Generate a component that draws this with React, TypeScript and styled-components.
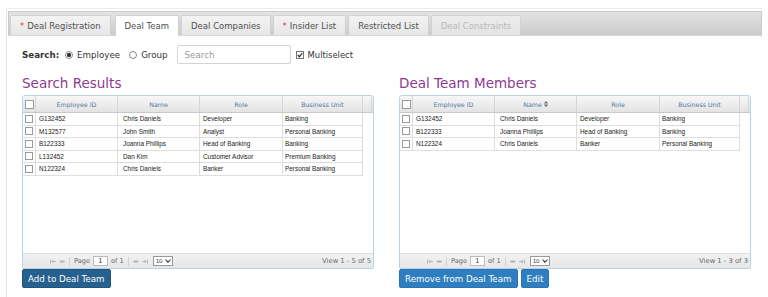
import styled, { createGlobalStyle } from "styled-components";

const GlobalStyle = createGlobalStyle`
  html, body {
    margin: 0;
    padding: 0;
    background: #fff;
  }
  body {
    font-family: "DejaVu Sans", Verdana, sans-serif;
  }
`;

type Member = [string, string, string, string];

const searchResults: Member[] = [
  ["G132452", "Chris Daniels", "Developer", "Banking"],
  ["M132577", "John Smith", "Analyst", "Personal Banking"],
  ["B122333", "Joanna Phillips", "Head of Banking", "Banking"],
  ["L132452", "Dan Kim", "Customer Advisor", "Premium Banking"],
  ["N122324", "Chris Daniels", "Banker", "Personal Banking"],
];

const teamMembers: Member[] = [
  ["G132452", "Chris Daniels", "Developer", "Banking"],
  ["B122333", "Joanna Phillips", "Head of Banking", "Banking"],
  ["N122324", "Chris Daniels", "Banker", "Personal Banking"],
];

const colWidths = [13, 82, 82, 83, 80];

const Page = styled.div`
  padding: 8px 6px 0 6px;
  height: 289px;
  overflow: hidden;
`;

const Frame = styled.div`
  border-left: 1px solid #e4e4e4;
  border-top: 1px solid #ececec;
  height: 100%;
  padding: 2px 0 0 1px;
  box-sizing: border-box;
`;

const TabBar = styled.div`
  display: flex;
  align-items: flex-end;
  gap: 2px;
  height: 23px;
  padding-left: 1px;
  border: 1px solid #c9c9c9;
  border-bottom-color: #d8d8d8;
  background: linear-gradient(#e3e3e3, #cbcbcb);
`;

const Tab = styled.div<{ $active?: boolean; $disabled?: boolean }>`
  height: ${(p) => (p.$active ? "21px" : "20px")};
  margin-bottom: ${(p) => (p.$active ? "-1px" : "0")};
  margin-left: ${(p) => (p.$active ? "2px" : "0")};
  padding: 0 9px;
  display: flex;
  align-items: center;
  box-sizing: border-box;
  font-size: 8.5px;
  border: 1px solid ${(p) => (p.$active ? "#d0d0d0" : "#d2d2d2")};
  border-bottom: none;
  border-radius: 2px 2px 0 0;
  color: ${(p) => (p.$disabled ? "#b8b8b8" : "#505050")};
  background: ${(p) =>
    p.$active
      ? "#fff"
      : p.$disabled
      ? "linear-gradient(#ececec, #e4e4e4)"
      : "linear-gradient(#f3f3f3, #e6e6e6)"};
  white-space: nowrap;
`;

const Req = styled.span`
  color: #e23a3a;
  margin-right: 3px;
`;

const Content = styled.div`
  padding-left: 14px;
`;

const SearchRow = styled.div`
  display: flex;
  align-items: center;
  height: 19px;
  margin-top: 9px;
  font-size: 8.7px;
  color: #333;
`;

const Label = styled.span`
  font-weight: bold;
  margin-right: 6px;
`;

const Option = styled.label`
  display: flex;
  align-items: center;
  gap: 4px;
  margin-right: 9px;
`;

const RadioDot = styled.span<{ $on?: boolean }>`
  width: 6px;
  height: 6px;
  border-radius: 50%;
  border: 1px solid #888;
  background: ${(p) => (p.$on ? "radial-gradient(#333 45%, #fff 55%)" : "#fff")};
`;

const SearchInput = styled.div`
  width: 114px;
  height: 19px;
  box-sizing: border-box;
  border: 1px solid #d4d4d4;
  border-radius: 2px;
  padding-left: 7px;
  display: flex;
  align-items: center;
  color: #9a9a9a;
  margin: 0 5px 0 0;
`;

const CheckMark = styled.span`
  width: 6px;
  height: 6px;
  border: 1px solid #777;
  display: flex;
  align-items: center;
  justify-content: center;
  margin-right: 4px;
  svg {
    display: block;
  }
`;

const Multi = styled.span`
  font-size: 8.4px;
`;

const Columns = styled.div`
  display: flex;
  gap: 25px;
  margin-top: 10px;
`;

const Panel = styled.div`
  width: 352px;
  display: flex;
  flex-direction: column;
`;

const Heading = styled.h2`
  margin: 0 0 3px 0;
  font-size: 13.5px;
  line-height: 18px;
  font-weight: normal;
  color: #8d3b91;
`;

const Grid = styled.div`
  border: 1px solid #b9d3e8;
  border-radius: 3px 3px 2px 2px;
  display: flex;
  flex-direction: column;
  overflow: hidden;
`;

const HeaderRow = styled.div`
  display: flex;
  height: 16px;
  border-bottom: 1px solid #c9c9c9;
  background: linear-gradient(#f7f7f7, #e3e3e3);
`;

const HeadCell = styled.div<{ $w: number }>`
  width: ${(p) => p.$w}px;
  flex: none;
  box-sizing: border-box;
  border-right: 1px solid #d5d5d5;
  display: flex;
  align-items: center;
  justify-content: center;
  gap: 2px;
  font-size: 6.3px;
  color: #5279a8;
`;

const Spacer = styled.div`
  flex: 1;
  border-right: 1px solid #d5d5d5;
  margin-right: 1px;
`;

const Body = styled.div`
  height: 140px;
  background: #fff;
`;

const Row = styled.div`
  display: flex;
  height: 12.5px;
  width: 340px;
  box-sizing: border-box;
  border-bottom: 1px solid #dedede;
`;

const Cell = styled.div<{ $w: number; $pad?: number }>`
  width: ${(p) => p.$w}px;
  flex: none;
  box-sizing: border-box;
  border-right: 1px solid #dedede;
  padding-left: ${(p) => p.$pad ?? 3}px;
  display: flex;
  align-items: center;
  justify-content: ${(p) => (p.$pad === 0 ? "center" : "flex-start")};
  font-family: "Liberation Sans", Arial, sans-serif;
  font-size: 6.4px;
  color: #222;
  white-space: nowrap;
  overflow: hidden;
`;

const Box = styled.span<{ $size?: number }>`
  width: ${(p) => p.$size ?? 6}px;
  height: ${(p) => p.$size ?? 6}px;
  border: 1px solid #9a9a9a;
  background: #fff;
  display: block;
`;

const Pager = styled.div`
  height: 14px;
  border-top: 1px solid #dcdcdc;
  background: linear-gradient(#f2f2f2, #e6e6e6);
  display: flex;
  align-items: center;
  font-size: 6.6px;
  color: #666;
  padding: 0 2px 0 27px;
`;

const PagerGroup = styled.div`
  display: flex;
  align-items: center;
  gap: 3px;
`;

const Sep = styled.span`
  width: 1px;
  height: 9px;
  background: #d4d4d4;
  margin: 0 1px;
`;

const PageInput = styled.span`
  width: 15px;
  height: 10px;
  box-sizing: border-box;
  border: 1px solid #bbb;
  background: #fff;
  display: flex;
  align-items: center;
  justify-content: center;
  color: #333;
`;

const PageSelect = styled.span`
  width: 20px;
  height: 10px;
  box-sizing: border-box;
  border: 1px solid #999;
  background: #fff;
  display: flex;
  align-items: center;
  justify-content: space-between;
  padding: 0 1px 0 2px;
  color: #333;
  font-size: 5.5px;
  margin-left: 2px;
`;

const ViewText = styled.span`
  margin-left: auto;
  font-size: 6.8px;
  color: #6a6a6a;
`;

const ButtonRow = styled.div`
  display: flex;
  gap: 3px;
`;

const ActionButton = styled.button<{ $dark?: boolean }>`
  height: 19px;
  padding: 0 5px;
  border: 1px solid ${(p) => (p.$dark ? "#1f5481" : "#2a74b3")};
  border-radius: 2px;
  background: ${(p) => (p.$dark ? "#26608f" : "#2f7fc0")};
  color: #fff;
  font-family: "DejaVu Sans", Verdana, sans-serif;
  font-size: 8.7px;
  cursor: pointer;
`;

const PagerIcon = ({ kind }: { kind: "first" | "prev" | "next" | "last" }) => {
  const flip = kind === "next" || kind === "last";
  const bar = kind === "first" || kind === "last";
  return (
    <svg width="6" height="5" viewBox="0 0 6 5" style={{ transform: flip ? "scaleX(-1)" : undefined }}>
      {bar && <line x1="0.5" y1="0.5" x2="0.5" y2="4.5" stroke="#aaa" strokeWidth="0.8" />}
      <path d={bar ? "M6 2.5 H2 M3.5 1 L2 2.5 L3.5 4" : "M6 2.5 H1 M2.5 1 L1 2.5 L2.5 4 M4.5 1 L3 2.5 L4.5 4"} stroke="#aaa" strokeWidth="0.8" fill="none" />
    </svg>
  );
};

const SortIcon = () => (
  <svg width="4" height="6" viewBox="0 0 4 6">
    <path d="M0 2.5 L2 0 L4 2.5 Z M0 3.5 L2 6 L4 3.5 Z" fill="#666" />
  </svg>
);

const MemberGrid = ({ rows, sortable }: { rows: Member[]; sortable?: boolean }) => (
  <Grid>
    <HeaderRow>
      <HeadCell $w={colWidths[0]}>
        <Box $size={7} />
      </HeadCell>
      <HeadCell $w={colWidths[1]}>Employee ID</HeadCell>
      <HeadCell $w={colWidths[2]}>
        Name{sortable && <SortIcon />}
      </HeadCell>
      <HeadCell $w={colWidths[3]}>Role</HeadCell>
      <HeadCell $w={colWidths[4]}>Business Unit</HeadCell>
      <Spacer />
    </HeaderRow>
    <Body>
      {rows.map((r) => (
        <Row key={r[0]}>
          <Cell $w={colWidths[0]} $pad={0}>
            <Box />
          </Cell>
          <Cell $w={colWidths[1]}>{r[0]}</Cell>
          <Cell $w={colWidths[2]} $pad={5}>
            {r[1]}
          </Cell>
          <Cell $w={colWidths[3]}>{r[2]}</Cell>
          <Cell $w={colWidths[4]} $pad={2}>
            {r[3]}
          </Cell>
        </Row>
      ))}
    </Body>
    <Pager>
      <PagerGroup>
        <PagerIcon kind="first" />
        <PagerIcon kind="prev" />
        <Sep />
        <span>Page</span>
        <PageInput>1</PageInput>
        <span>of 1</span>
        <Sep />
        <PagerIcon kind="next" />
        <PagerIcon kind="last" />
        <PageSelect>
          10
          <svg width="6" height="4" viewBox="0 0 6 4">
            <path d="M0.5 0.5 L3 3.2 L5.5 0.5" stroke="#333" strokeWidth="1.1" fill="none" />
          </svg>
        </PageSelect>
      </PagerGroup>
      <ViewText>
        View 1 - {rows.length} of {rows.length}
      </ViewText>
    </Pager>
  </Grid>
);

export default function App() {
  return (
    <>
      <GlobalStyle />
      <Page>
        <Frame>
          <TabBar>
            <Tab>
              <Req>*</Req>Deal Registration
            </Tab>
            <Tab $active>Deal Team</Tab>
            <Tab>Deal Companies</Tab>
            <Tab>
              <Req>*</Req>Insider List
            </Tab>
            <Tab>Restricted List</Tab>
            <Tab $disabled>Deal Constraints</Tab>
          </TabBar>
          <Content>
            <SearchRow>
              <Label>Search:</Label>
              <Option>
                <RadioDot $on />
                Employee
              </Option>
              <Option>
                <RadioDot />
                Group
              </Option>
              <SearchInput>Search</SearchInput>
              <CheckMark>
                <svg width="6" height="6" viewBox="0 0 6 6">
                  <path d="M0.8 3 L2.4 4.8 L5.3 1" stroke="#222" strokeWidth="1.2" fill="none" />
                </svg>
              </CheckMark>
              <Multi>Multiselect</Multi>
            </SearchRow>
            <Columns>
              <Panel>
                <Heading>Search Results</Heading>
                <MemberGrid rows={searchResults} />
                <ButtonRow>
                  <ActionButton $dark>Add to Deal Team</ActionButton>
                </ButtonRow>
              </Panel>
              <Panel>
                <Heading>Deal Team Members</Heading>
                <MemberGrid rows={teamMembers} sortable />
                <ButtonRow>
                  <ActionButton>Remove from Deal Team</ActionButton>
                  <ActionButton>Edit</ActionButton>
                </ButtonRow>
              </Panel>
            </Columns>
          </Content>
        </Frame>
      </Page>
    </>
  );
}
